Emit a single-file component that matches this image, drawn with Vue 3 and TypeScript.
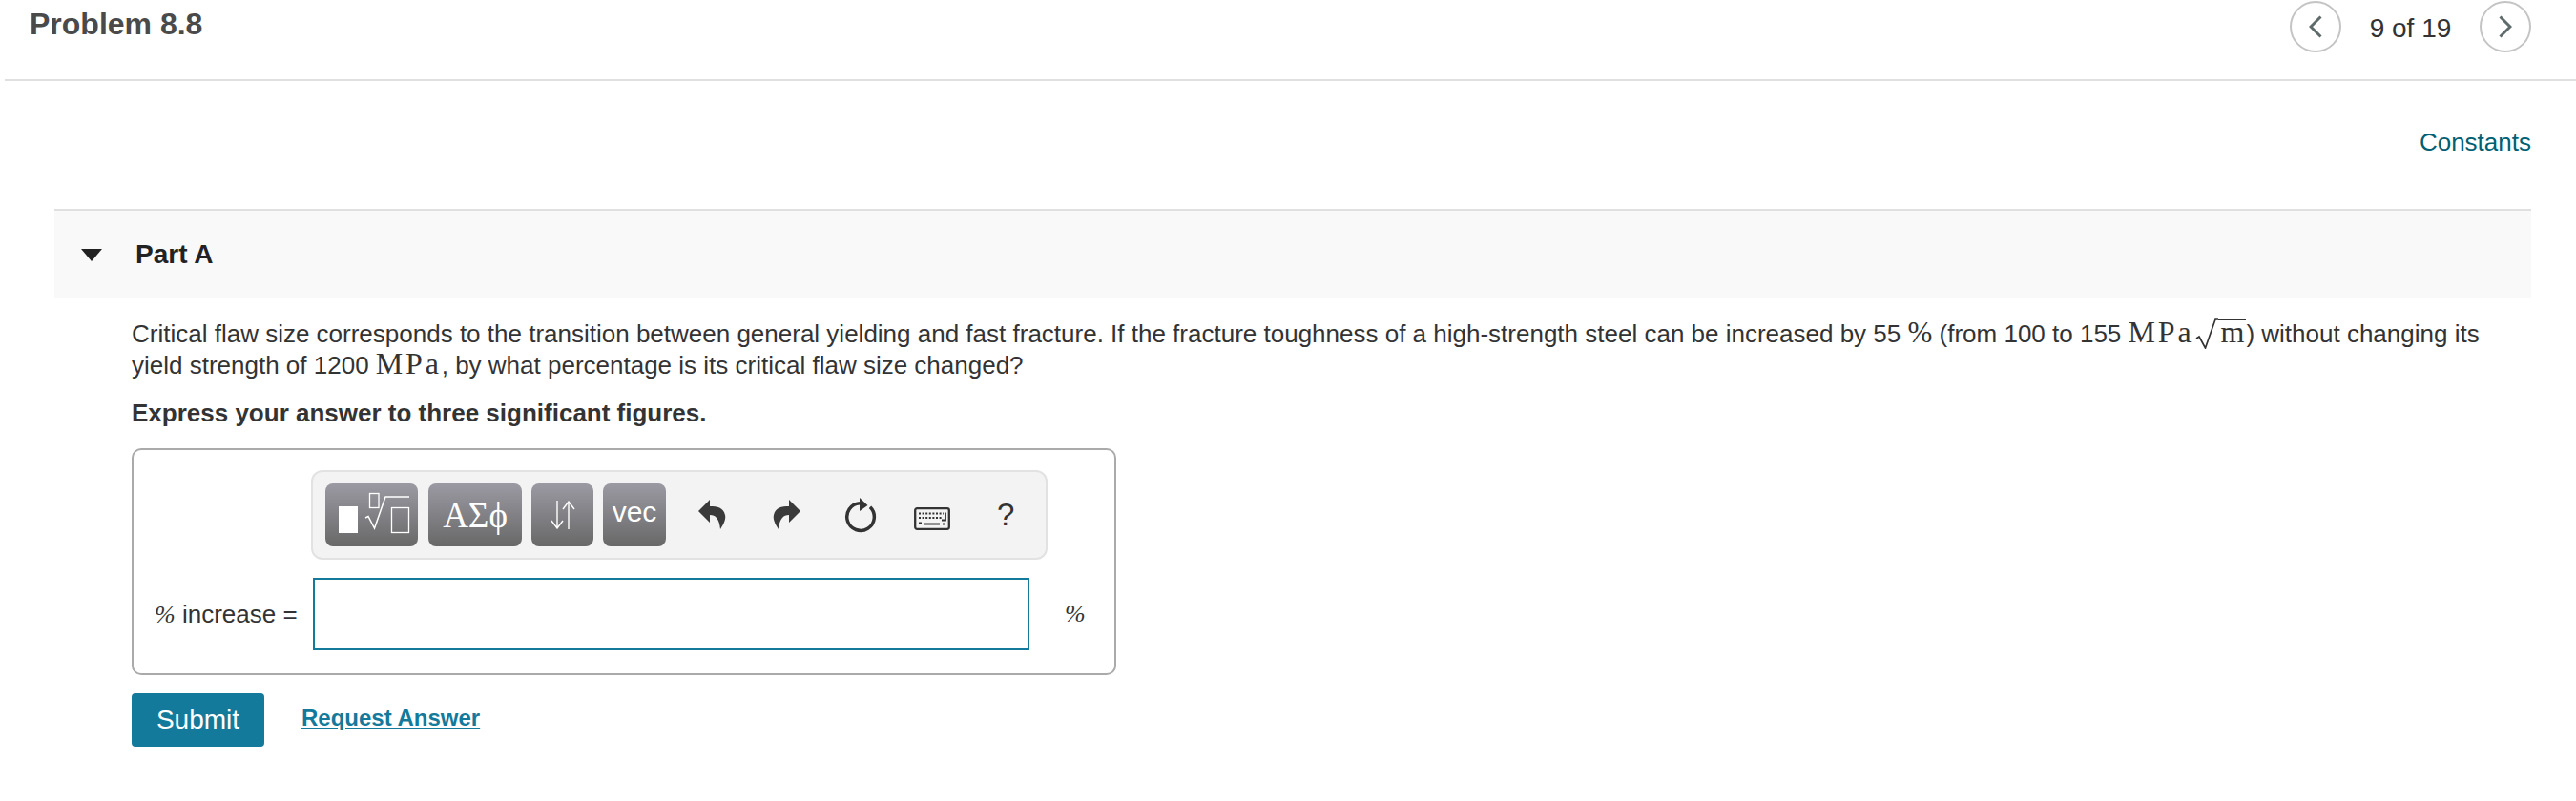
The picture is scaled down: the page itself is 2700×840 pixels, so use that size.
<script setup lang="ts">
const title = 'Problem 8.8'
</script>

<template>
  <div class="page">
    <header class="top">
      <h1 class="title">{{ title }}</h1>
      <nav class="pager">
        <button class="circle" aria-label="Previous">
          <svg width="14" height="24" viewBox="0 0 14 24"><path d="M12.5 1.5 L2 12 L12.5 22.5" fill="none" stroke="#5f6b6b" stroke-width="3" /></svg>
        </button>
        <span class="count">9 of 19</span>
        <button class="circle" aria-label="Next">
          <svg width="14" height="24" viewBox="0 0 14 24"><path d="M1.5 1.5 L12 12 L1.5 22.5" fill="none" stroke="#5f6b6b" stroke-width="3" /></svg>
        </button>
      </nav>
    </header>

    <div class="constants-row"><a class="constants">Constants</a></div>

    <section class="part">
      <div class="part-head">
        <svg class="caret" width="22" height="13" viewBox="0 0 22 13"><path d="M0 0 H22 L11 13 Z" fill="#222" /></svg>
        <span class="part-title">Part A</span>
      </div>

      <div class="part-body">
        <p class="q">Critical flaw size corresponds to the transition between general yielding and fast fracture. If the fracture toughness of a high-strength steel can be increased by 55 <span class="m">%</span> (from 100 to 155 <span class="m mpa">MPa</span><span class="root"><svg width="24" height="32" viewBox="0 0 24 32"><path d="M1 21 L4 19 L10.5 31 L21 1 H24" fill="none" stroke="#333" stroke-width="1.7" /></svg><span class="m rad">m</span></span>) without changing its<br />yield strength of 1200 <span class="m mpa">MPa</span>, by what percentage is its critical flaw size changed?</p>
        <p class="hint">Express your answer to three significant figures.</p>

        <div class="answer">
          <div class="toolbar">
            <div class="tb-btn b1">
              <svg width="97" height="66" viewBox="0 0 97 66">
                <rect x="14" y="24" width="20" height="28" fill="#fff" />
                <rect x="46.5" y="10.5" width="9.5" height="15" fill="none" stroke="#fff" stroke-width="1.3" />
                <path d="M42 36 L45 34.5 L51.5 47 L63 14 H88" fill="none" stroke="#fff" stroke-width="1.5" />
                <rect x="69.5" y="25.5" width="18" height="26" fill="none" stroke="#fff" stroke-width="1.3" />
              </svg>
            </div>
            <div class="tb-btn b2">ΑΣϕ</div>
            <div class="tb-btn b3">
              <svg width="26" height="30" viewBox="0 0 26 30"><path d="M7 0 V29 M1 21 L7 29 L13 21 M19 30 V1 M13 9 L19 1 L25 9" fill="none" stroke="#fff" stroke-width="1.4" /></svg>
            </div>
            <div class="tb-btn b4">vec</div>
            <div class="tb-icons">
              <svg class="i-undo" width="29" height="32" viewBox="0 0 29 32"><path d="M12 0 L0 12 L12 24 V16 C18 16 22 20 23 31 C27 25 29 20 28 16 C26 8 20 7 12 7 Z" fill="#3a3a3a" /></svg>
              <svg class="i-redo" width="29" height="32" viewBox="0 0 29 32"><path d="M17 0 L29 12 L17 24 V16 C11 16 7 20 6 31 C2 25 0 20 1 16 C3 8 9 7 17 7 Z" fill="#3a3a3a" /></svg>
              <svg class="i-reload" width="34" height="38" viewBox="0 0 34 38"><path d="M16 6.8 A14.3 14.3 0 1 0 27 10.8" fill="none" stroke="#333" stroke-width="3.5" /><path d="M16 1 L24.5 9 L16 15 Z" fill="#333" /></svg>
              <svg class="i-keys" width="38" height="24" viewBox="0 0 38 24">
                <rect x="1.2" y="1.2" width="35.6" height="21.6" rx="2" fill="none" stroke="#333" stroke-width="2.3" />
                <path d="M5 6.5 H31 M5 11 H29" fill="none" stroke="#333" stroke-width="1.8" stroke-dasharray="2 1.6" />
                <path d="M33 5.5 V13.5 H29 M5 16.5 H8 M11 17.5 H27 M30 17.5 H33" fill="none" stroke="#333" stroke-width="1.8" />
              </svg>
              <span class="q-mark">?</span>
            </div>
          </div>
          <div class="entry">
            <label class="lab"><span class="m pct">%</span> increase =</label>
            <div class="field"></div>
            <span class="m unit">%</span>
          </div>
        </div>

        <div class="actions">
          <button class="submit">Submit</button>
          <a class="request">Request Answer</a>
        </div>
      </div>
    </section>
  </div>
</template>

<style>
html, body { margin: 0; background: #fff; }
</style>

<style scoped>
.page {
  width: 2700px;
  height: 840px;
  overflow: hidden;
  box-sizing: border-box;
  font-family: "Liberation Sans", Arial, sans-serif;
  color: #333;
  background: #fff;
}
.top {
  margin-left: 5px;
  height: 82px;
  padding: 1px 47px 0 26px;
  display: flex;
  justify-content: space-between;
  align-items: flex-start;
  border-bottom: 2px solid #e0e0e0;
}
.title {
  margin: 6px 0 0;
  font-size: 32px;
  line-height: 37px;
  font-weight: 700;
  color: #4a4a4a;
}
.pager { display: flex; align-items: center; }
.circle {
  width: 54px;
  height: 54px;
  padding: 0;
  border-radius: 50%;
  border: 2px solid #c4c4c4;
  background: #fff;
  display: flex;
  align-items: center;
  justify-content: center;
}
.count { width: 145px; text-align: center; font-size: 28px; color: #333; padding-top: 4px; }
.constants-row {
  height: 134px;
  padding: 38px 47px 0 0;
  box-sizing: border-box;
  text-align: right;
}
.constants { font-size: 26px; line-height: 52px; color: #005f73; }
.part { margin: 0 47px 0 57px; }
.part-head {
  height: 92px;
  border-top: 2px solid #e0e0e0;
  background: #f9f9f9;
  display: flex;
  align-items: center;
  padding-left: 28px;
}
.caret { margin-right: 35px; }
.part-title { font-size: 28px; font-weight: 700; color: #222; }
.part-body { padding: 21px 0 0 81px; }
.q { margin: 0; font-size: 26px; line-height: 33px; color: #333; white-space: nowrap; }
.m { font-family: "Liberation Serif", "DejaVu Serif", serif; font-size: 31px; line-height: 0; }
.mpa { font-size: 32px; letter-spacing: 2.8px; }
.root { margin-left: 2px; white-space: nowrap; }
.root svg { vertical-align: -7px; }
.rad {
  display: inline-block;
  box-sizing: border-box;
  width: 29px;
  height: 24px;
  border-top: 1.7px solid #333;
  line-height: 24px;
  font-size: 32px;
  text-align: center;
}
.hint { margin: 17px 0 0; font-size: 26px; line-height: 33px; font-weight: 700; color: #333; }
.answer {
  margin-top: 20px;
  width: 1032px;
  height: 238px;
  box-sizing: border-box;
  border: 2px solid #aaa;
  border-radius: 10px;
  padding: 21px 0 0;
}
.toolbar {
  margin-left: 186px;
  width: 772px;
  height: 94px;
  box-sizing: border-box;
  border: 2px solid #e2e2e2;
  border-radius: 12px;
  background: #f3f3f3;
  display: flex;
  align-items: center;
  padding-left: 13px;
}
.tb-btn {
  height: 66px;
  box-sizing: border-box;
  border-radius: 8px;
  background: linear-gradient(#9b9aa3, #686868);
  color: #fff;
  display: flex;
  align-items: center;
  justify-content: center;
  margin-right: 10px;
}
.b1 { width: 97px; margin-right: 11px; }
.b2 { width: 98px; font-family: "Liberation Serif", serif; font-size: 37px; }
.b3 { width: 65px; }
.b4 { width: 66px; font-size: 30px; padding-bottom: 6px; margin-right: 0; }
.tb-icons { display: flex; align-items: center; margin-left: 34px; }
.i-redo { margin-left: 49px; }
.i-reload { margin-left: 46px; }
.i-keys { margin-left: 39px; margin-top: 8px; }
.q-mark { font-size: 33px; color: #333; margin-left: 49px; }
.entry { display: flex; align-items: center; margin-top: 19px; padding-left: 22px; }
.lab { width: 166px; font-size: 26px; color: #333; white-space: nowrap; }
.pct { font-size: 26px; font-style: italic; }
.field {
  width: 747px;
  height: 72px;
  border: 2px solid #147a9c;
  background: #fff;
}
.unit { margin-left: 37px; font-size: 26px; font-style: italic; }
.actions { display: flex; align-items: center; margin-top: 19px; }
.submit {
  width: 139px;
  height: 56px;
  padding: 0;
  border: 0;
  border-radius: 4px;
  background: #147a9c;
  color: #fff;
  font-family: inherit;
  font-size: 28px;
}
.request {
  margin-left: 39px;
  padding-bottom: 4px;
  font-size: 24px;
  font-weight: 700;
  color: #147a9c;
  text-decoration: underline;
}
</style>
